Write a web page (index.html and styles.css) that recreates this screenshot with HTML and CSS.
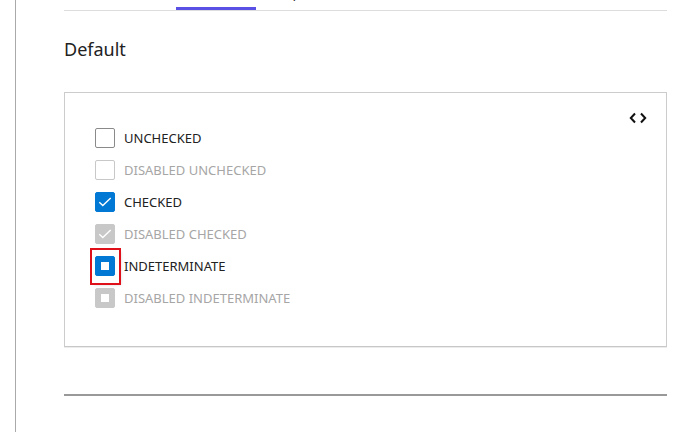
FILE: index.html
```html
<!DOCTYPE html>
<html lang="en">
<head>
<meta charset="utf-8">
<title>Checkbox</title>
<link rel="stylesheet" href="styles.css">
</head>
<body>
<div class="page">
  <div class="rail"></div>
  <main class="main">
    <nav class="tabs">
      <span class="tab tab-first">Overview</span>
      <span class="tab tab-active">Demo</span>
      <span class="tab tab-third">Props</span>
    </nav>
    <h2 class="section-title">Default</h2>
    <section class="example">
      <button class="code-toggle" type="button" aria-label="Show code">
        <svg width="18" height="12" viewBox="0 0 18 12"><path d="M6 1.5 1.8 6 6 10.5M12 1.5 16.2 6 12 10.5" fill="none" stroke="#111" stroke-width="2"/></svg>
      </button>
      <ul class="list">
        <li class="row">
          <span class="box"></span>
          <span class="label">UNCHECKED</span>
        </li>
        <li class="row disabled">
          <span class="box"></span>
          <span class="label">DISABLED UNCHECKED</span>
        </li>
        <li class="row">
          <span class="box checked"><svg width="14" height="10" viewBox="0 0 14 10"><path d="M1.3 5.2 4.8 8.6 12.7 1" fill="none" stroke="#fff" stroke-width="1.4"/></svg></span>
          <span class="label">CHECKED</span>
        </li>
        <li class="row disabled">
          <span class="box checked"><svg width="14" height="10" viewBox="0 0 14 10"><path d="M1.3 5.2 4.8 8.6 12.7 1" fill="none" stroke="#fff" stroke-width="1.4"/></svg></span>
          <span class="label">DISABLED CHECKED</span>
        </li>
        <li class="row">
          <span class="focus-ring"><span class="box checked"><span class="dot"></span></span></span>
          <span class="label">INDETERMINATE</span>
        </li>
        <li class="row disabled">
          <span class="box checked"><span class="dot"></span></span>
          <span class="label">DISABLED INDETERMINATE</span>
        </li>
      </ul>
    </section>
    <hr class="divider">
  </main>
</div>
</body>
</html>
```
FILE: styles.css
```css
* { box-sizing: border-box; }
html, body { margin: 0; padding: 0; background: #fff; }
body {
  font-family: "Noto Sans", "Open Sans", sans-serif;
  color: #222;
  overflow: hidden;
  height: 432px;
}
.page { display: flex; height: 432px; }
.rail {
  width: 16px;
  flex: none;
  border-right: 1px solid #aaa;
}
.main {
  width: 651px;
  padding-left: 48px;
}
.tabs {
  display: flex;
  margin-top: -32px;
  height: 43px;
  border-bottom: 1px solid #ddd;
}
.tab {
  display: block;
  height: 42px;
  font-size: 14px;
  line-height: 20px;
  padding-top: 14px;
  color: #333;
  border-bottom: 3px solid transparent;
}
.tab-first { width: 112px; }
.tab-active {
  width: 80px;
  border-bottom-color: #5b50e6;
  text-align: center;
  color: transparent;
}
.tab-third { padding-left: 14px; }
.section-title {
  margin: 26px 0 0;
  font-size: 18px;
  line-height: 24px;
  font-weight: 400;
  color: #222;
}
.example {
  position: relative;
  margin-top: 31px;
  height: 255px;
  border: 1px solid #ccc;
  border-bottom-color: #c8c8c8;
  box-shadow: 0 1px 0 #ececec;
  padding: 35px 0 0 30px;
}
.code-toggle {
  position: absolute;
  top: 19px;
  right: 19px;
  padding: 0;
  border: 0;
  background: none;
  display: flex;
}
.list {
  list-style: none;
  margin: 0;
  padding: 0;
  display: flex;
  flex-direction: column;
  gap: 12px;
}
.row {
  display: flex;
  align-items: center;
  gap: 9px;
  height: 20px;
}
.box {
  width: 20px;
  height: 20px;
  flex: none;
  border: 1px solid #8a8a8a;
  border-radius: 2px;
  background: #fff;
  display: flex;
  align-items: center;
  justify-content: center;
}
.disabled .box { border-color: #c8c8c8; }
.box.checked {
  background: #0078d4;
  border-color: #0078d4;
}
.disabled .box.checked {
  background: #c8c8c8;
  border-color: #c8c8c8;
}
.dot {
  width: 8px;
  height: 8px;
  background: #fff;
}
.label {
  font-size: 13px;
  line-height: 20px;
  color: #222;
}
.disabled .label { color: #a6a6a6; }
.focus-ring {
  display: flex;
  flex: none;
  margin: -6px -4px -7px -3px;
  padding: 6px 4px 7px 3px;
  outline: 2px solid #e0101a;
  outline-offset: 0;
  box-shadow: 2px 2px 3px rgba(0,0,0,0.15);
}
.divider {
  margin: 47px 0 0;
  border: 0;
  height: 2px;
  background: #999;
}
```
